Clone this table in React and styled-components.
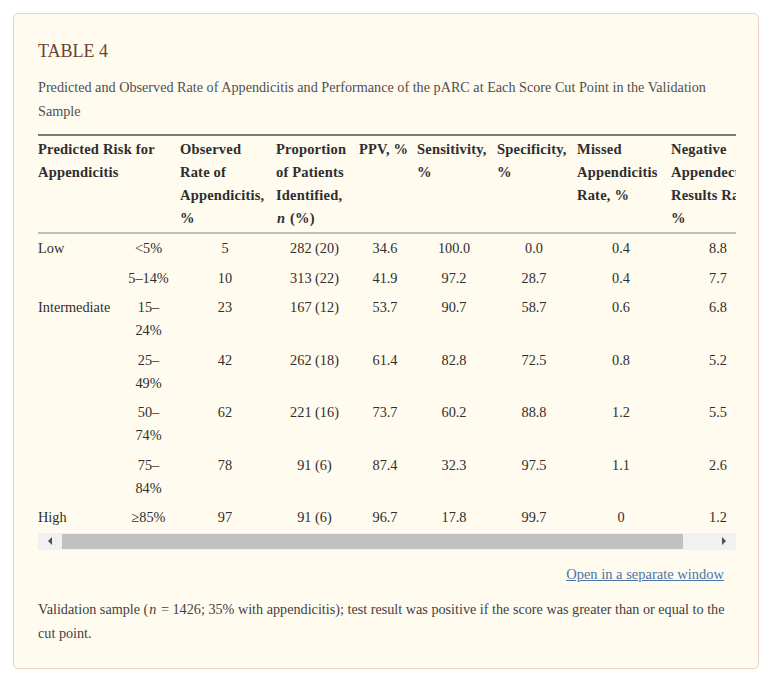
import styled, { createGlobalStyle } from "styled-components";
import * as React from "react";

const GlobalStyle = createGlobalStyle`
  html, body {
    margin: 0;
    padding: 0;
    background: #ffffff;
  }
  body {
    font-family: "Liberation Serif", "DejaVu Serif", serif;
    color: #333333;
  }
`;

const Ital = styled.i`
  display: inline-block;
  padding: 0 1px;
`;

const columns = [85, 57, 96, 83, 58, 80, 80, 94, 100];

const headers = [
  { lines: ["Predicted Risk for", "Appendicitis"], span: 2 },
  { lines: ["Observed", "Rate of", "Appendicitis,", "%"] },
  { lines: ["Proportion", "of Patients", "Identified,", <><Ital>n</Ital> (%)</>] },
  { lines: ["PPV, %"] },
  { lines: ["Sensitivity,", "%"] },
  { lines: ["Specificity,", "%"] },
  { lines: ["Missed", "Appendicitis", "Rate, %"] },
  { lines: ["Negative", "Appendectomy", "Results Rate,", "%"] },
];

const rows = [
  { risk: "Low", cut: ["<5%"], values: ["5", "282 (20)", "34.6", "100.0", "0.0", "0.4", "8.8"] },
  { risk: "", cut: ["5–14%"], values: ["10", "313 (22)", "41.9", "97.2", "28.7", "0.4", "7.7"] },
  { risk: "Intermediate", cut: ["15–", "24%"], values: ["23", "167 (12)", "53.7", "90.7", "58.7", "0.6", "6.8"] },
  { risk: "", cut: ["25–", "49%"], values: ["42", "262 (18)", "61.4", "82.8", "72.5", "0.8", "5.2"] },
  { risk: "", cut: ["50–", "74%"], values: ["62", "221 (16)", "73.7", "60.2", "88.8", "1.2", "5.5"] },
  { risk: "", cut: ["75–", "84%"], values: ["78", "91 (6)", "87.4", "32.3", "97.5", "1.1", "2.6"] },
  { risk: "High", cut: ["≥85%"], values: ["97", "91 (6)", "96.7", "17.8", "99.7", "0", "1.2"] },
];

const Lines = ({ lines }) =>
  lines.map((line, i) => (
    <React.Fragment key={i}>
      {i > 0 && <br />}
      {line}
    </React.Fragment>
  ));

const App = () => {
  return (
    <>
      <GlobalStyle />
      <Card>
        <Title>TABLE 4</Title>
        <Caption>
          Predicted and Observed Rate of Appendicitis and Performance of the pARC at Each Score Cut Point in the
          Validation Sample
        </Caption>
        <TableWrap>
          <Table>
            <colgroup>
              {columns.map((w, i) => (
                <col key={i} style={{ width: w }} />
              ))}
            </colgroup>
            <thead>
              <tr>
                {headers.map((h, i) => (
                  <HeadCell key={i} colSpan={h.span || 1}>
                    <Lines lines={h.lines} />
                  </HeadCell>
                ))}
              </tr>
            </thead>
            <tbody>
              {rows.map((r, i) => (
                <tr key={i}>
                  <Cell>{r.risk}</Cell>
                  <Cell $center>
                    <Lines lines={r.cut} />
                  </Cell>
                  {r.values.map((v, j) => (
                    <Cell key={j} $center>
                      {v}
                    </Cell>
                  ))}
                </tr>
              ))}
            </tbody>
          </Table>
        </TableWrap>
        <ScrollBar>
          <ScrollButton>
            <Arrow $dir="left" />
          </ScrollButton>
          <ScrollTrack>
            <ScrollThumb />
          </ScrollTrack>
          <ScrollButton>
            <Arrow $dir="right" />
          </ScrollButton>
        </ScrollBar>
        <LinkRow>
          <WindowLink href="#">Open in a separate window</WindowLink>
        </LinkRow>
        <Footnote>
          Validation sample (<Ital>n</Ital> = 1426; 35% with appendicitis); test result was positive if the score
          was greater than or equal to the cut point.
        </Footnote>
      </Card>
    </>
  );
};

export default App;

const Card = styled.div`
  box-sizing: border-box;
  width: 746px;
  margin: 13px 9px 13px 13px;
  padding: 24px 24px 23px 24px;
  background: #fffbef;
  border: 1px solid #ebd2c2;
  border-radius: 5px;
`;

const Title = styled.h3`
  margin: 0;
  font-size: 18px;
  font-weight: normal;
  line-height: 26px;
  color: #6a4431;
`;

const Caption = styled.p`
  margin: 12px 0 0 0;
  font-size: 14.2px;
  line-height: 23.5px;
  color: #4f4f4f;
`;

const TableWrap = styled.div`
  margin-top: 11px;
  width: 698px;
  overflow: hidden;
`;

const Table = styled.table`
  width: 733px;
  table-layout: fixed;
  border-collapse: collapse;
  font-size: 14.3px;
  line-height: 23px;
  color: #2e2e2e;
`;

const HeadCell = styled.th`
  text-align: left;
  vertical-align: top;
  font-size: 14.5px;
  font-weight: bold;
  letter-spacing: 0.2px;
  padding: 2px 6px 2px 0;
  border-top: 2px solid #7a7a7a;
  border-bottom: 2px solid #bdbdbd;
  white-space: nowrap;
  overflow: hidden;
`;

const Cell = styled.td`
  text-align: ${(p) => (p.$center ? "center" : "left")};
  vertical-align: top;
  padding: 3px 6px 3.5px 0;
  white-space: nowrap;
`;

const ScrollBar = styled.div`
  display: flex;
  width: 698px;
  height: 17px;
  background: #f1f1f1;
`;

const ScrollButton = styled.div`
  width: 24px;
  display: flex;
  align-items: center;
  justify-content: center;
`;

const ScrollTrack = styled.div`
  flex: 1;
  display: flex;
  align-items: center;
`;

const ScrollThumb = styled.div`
  width: 621px;
  height: 15px;
  background: #c1c1c1;
`;

const Arrow = styled.div`
  width: 0;
  height: 0;
  border-top: 4px solid transparent;
  border-bottom: 4px solid transparent;
  ${(p) =>
    p.$dir === "left"
      ? "border-right: 4px solid #505050;"
      : "border-left: 4px solid #505050;"}
`;

const LinkRow = styled.div`
  width: 698px;
  margin-top: 13px;
  padding-right: 12px;
  box-sizing: border-box;
  text-align: right;
  font-size: 14.5px;
  line-height: 23px;
`;

const WindowLink = styled.a`
  color: #4d74a8;
  text-decoration: underline;
`;

const Footnote = styled.p`
  margin: 11.5px 0 0 0;
  font-size: 14.2px;
  line-height: 24px;
  color: #3f3f3f;
`;
